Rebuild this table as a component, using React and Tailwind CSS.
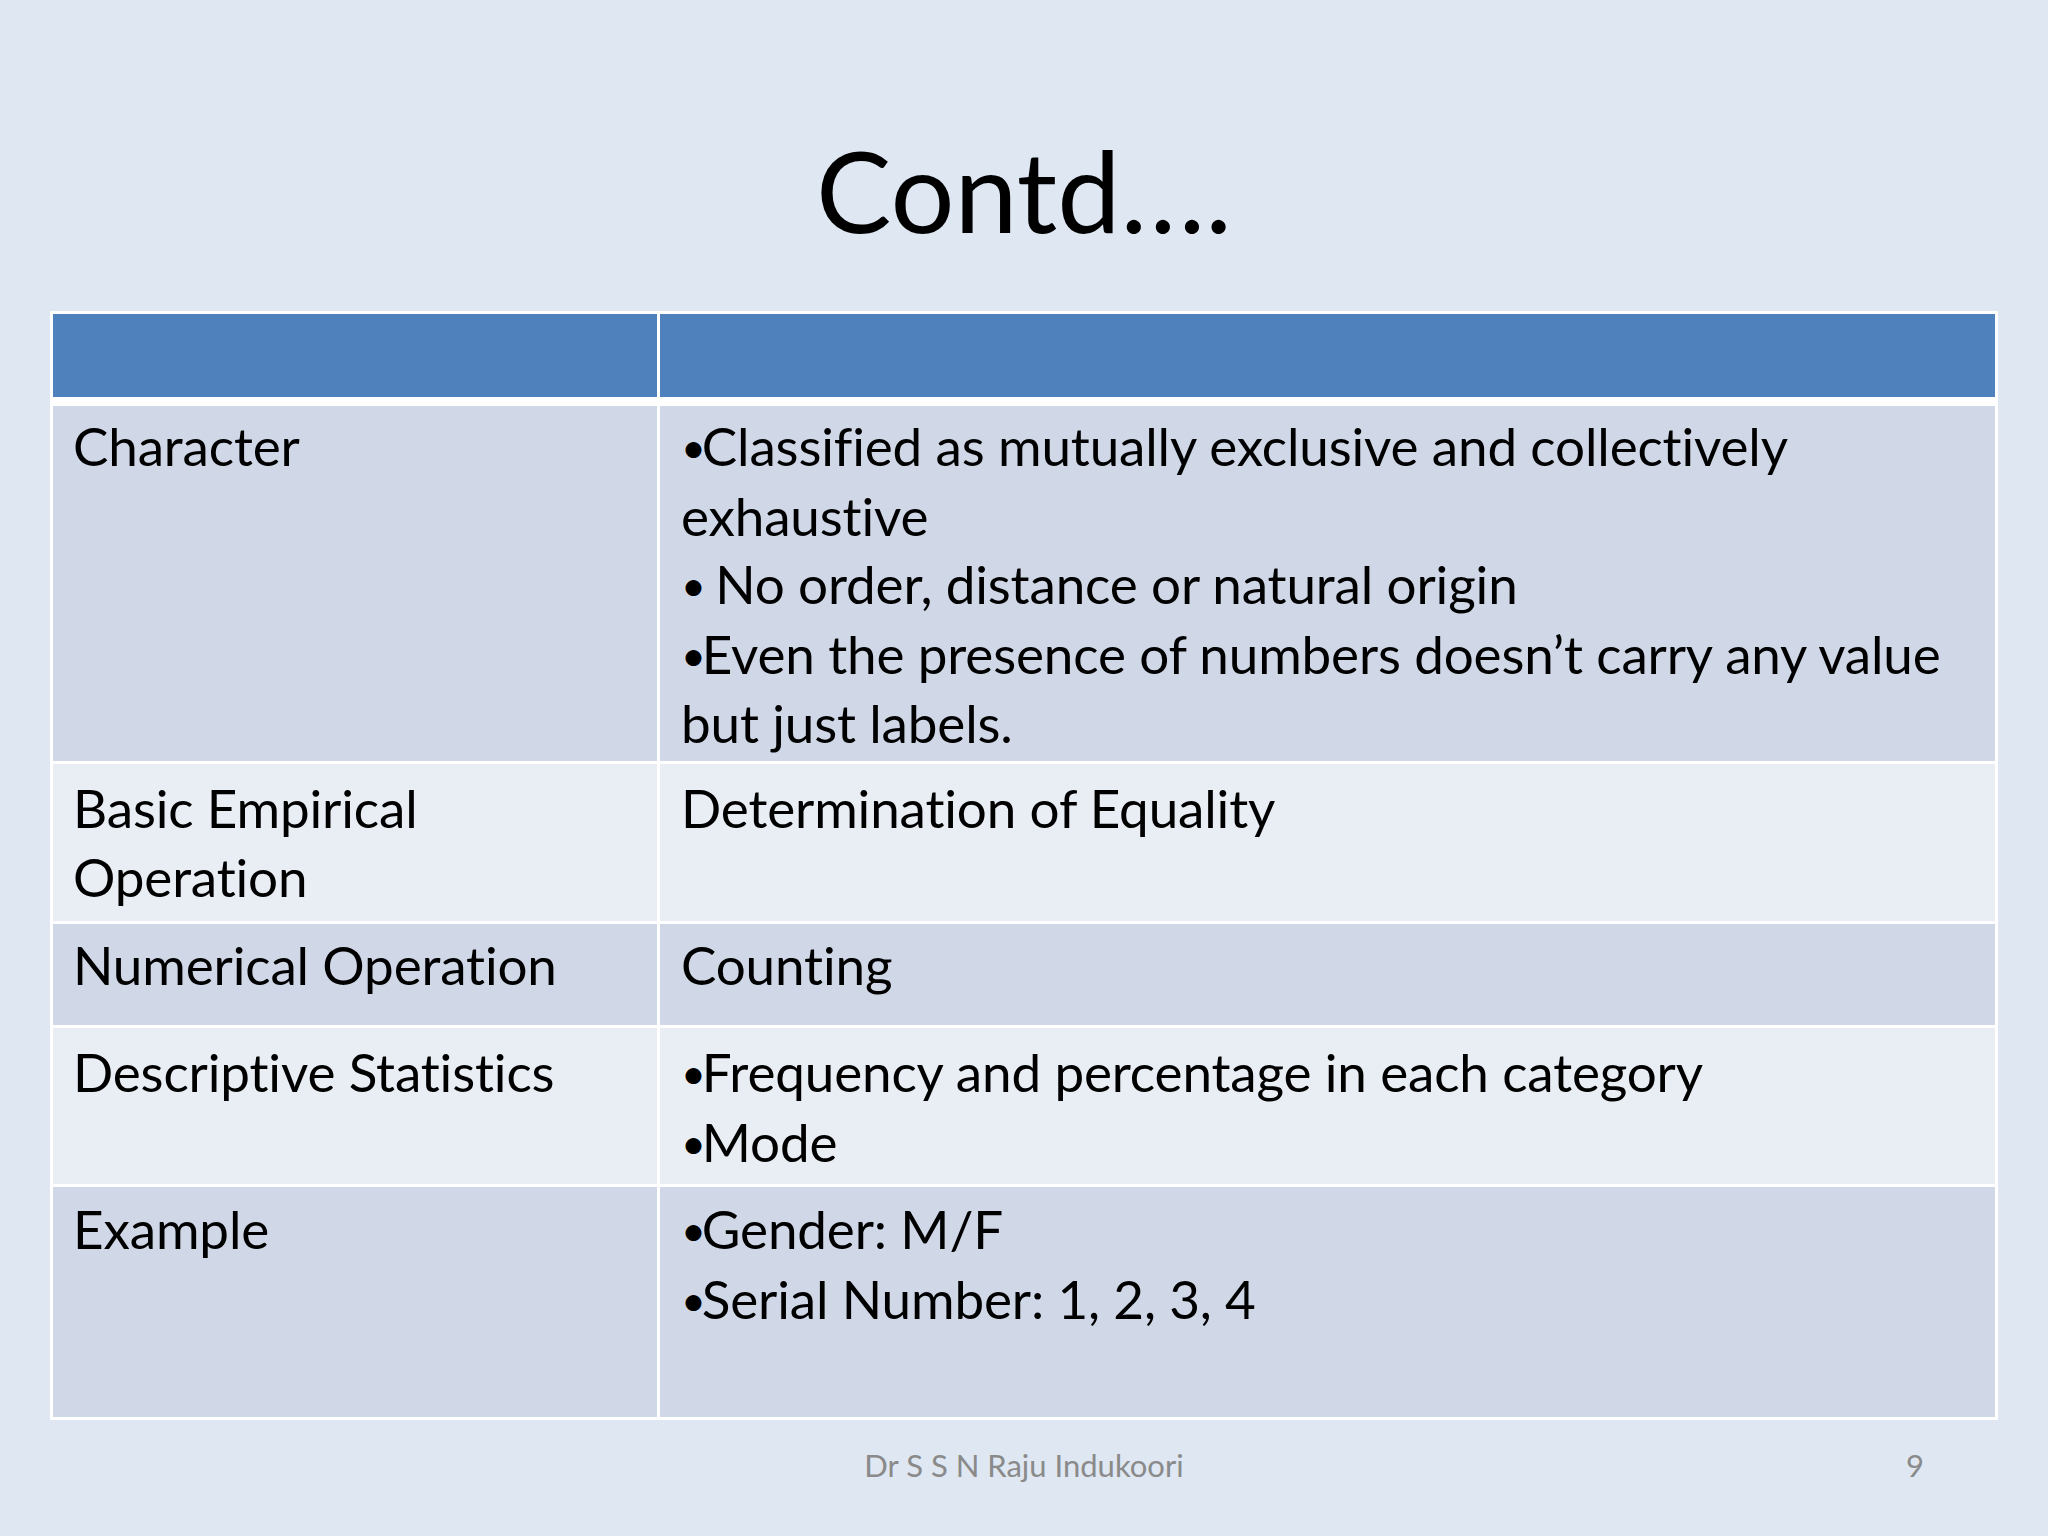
function Line({ t }) {
  if (t.startsWith("•")) {
    return (
      <div className="whitespace-nowrap">
        <span className="text-[43px] align-[3px] mr-[-4px]">•</span>
        {t.slice(1)}
      </div>
    );
  }
  return <div className="whitespace-nowrap">{t}</div>;
}

export default function App() {
  const rows = [
    {
      h: "h-[355px]",
      pt: "pt-[6px]",
      bg: "bg-[#d0d8e8]",
      left: ["Character"],
      right: [
        "•Classified as mutually exclusive and collectively",
        "exhaustive",
        "• No order, distance or natural origin",
        "•Even the presence of numbers doesn’t carry any value",
        "but just labels.",
      ],
    },
    {
      h: "h-[157px]",
      pt: "pt-[10px]",
      bg: "bg-[#e9edf4]",
      left: ["Basic Empirical", "Operation"],
      right: ["Determination of Equality"],
    },
    {
      h: "h-[101px]",
      pt: "pt-[7px]",
      bg: "bg-[#d0d8e8]",
      left: ["Numerical Operation"],
      right: ["Counting"],
    },
    {
      h: "h-[156px]",
      pt: "pt-[10px]",
      bg: "bg-[#e9edf4]",
      left: ["Descriptive Statistics"],
      right: ["•Frequency and percentage in each category", "•Mode"],
    },
    {
      h: "h-[230px]",
      pt: "pt-[8px]",
      bg: "bg-[#d0d8e8]",
      left: ["Example"],
      right: ["•Gender: M/F", "•Serial Number: 1, 2, 3, 4"],
    },
  ];

  return (
    <div className="w-[2048px] h-[1536px] bg-[#dee7f2] flex flex-col [font-family:Lato,sans-serif] [font-variant-ligatures:none] text-black overflow-hidden">
      <div className="h-[311px] pt-[122px] flex justify-center">
        <h1 className="text-[113px] leading-[1.2] whitespace-nowrap">Contd….</h1>
      </div>

      <div className="ml-[50px] w-[1948px] bg-white p-[3px] flex flex-col gap-[3px]">
        <div className="grid grid-cols-[604px_1335px] gap-x-[3px] h-[83px] mb-[6px]">
          <div className="bg-[#4f81bd]" />
          <div className="bg-[#4f81bd]" />
        </div>
        {rows.map((r, i) => (
          <div key={i} className={`grid grid-cols-[604px_1335px] gap-x-[3px] ${r.h}`}>
            <div className={`${r.bg} ${r.pt} pl-[20px] text-[53px] leading-[68.6px] tracking-[-0.15px]`}>
              {r.left.map((t, j) => (
                <Line key={j} t={t} />
              ))}
            </div>
            <div className={`${r.bg} ${r.pt} pl-[21px] text-[53px] leading-[68.6px] tracking-[-0.15px]`}>
              {r.right.map((t, j) => (
                <Line key={j} t={t} />
              ))}
            </div>
          </div>
        ))}
      </div>

      <div className="mt-[25px] grid grid-cols-[1fr_auto_1fr] text-[31px] leading-[40px] text-[#8a8a8a]">
        <div />
        <div className="whitespace-nowrap">Dr S S N Raju Indukoori</div>
        <div className="text-right pr-[124px]">9</div>
      </div>
    </div>
  );
}
